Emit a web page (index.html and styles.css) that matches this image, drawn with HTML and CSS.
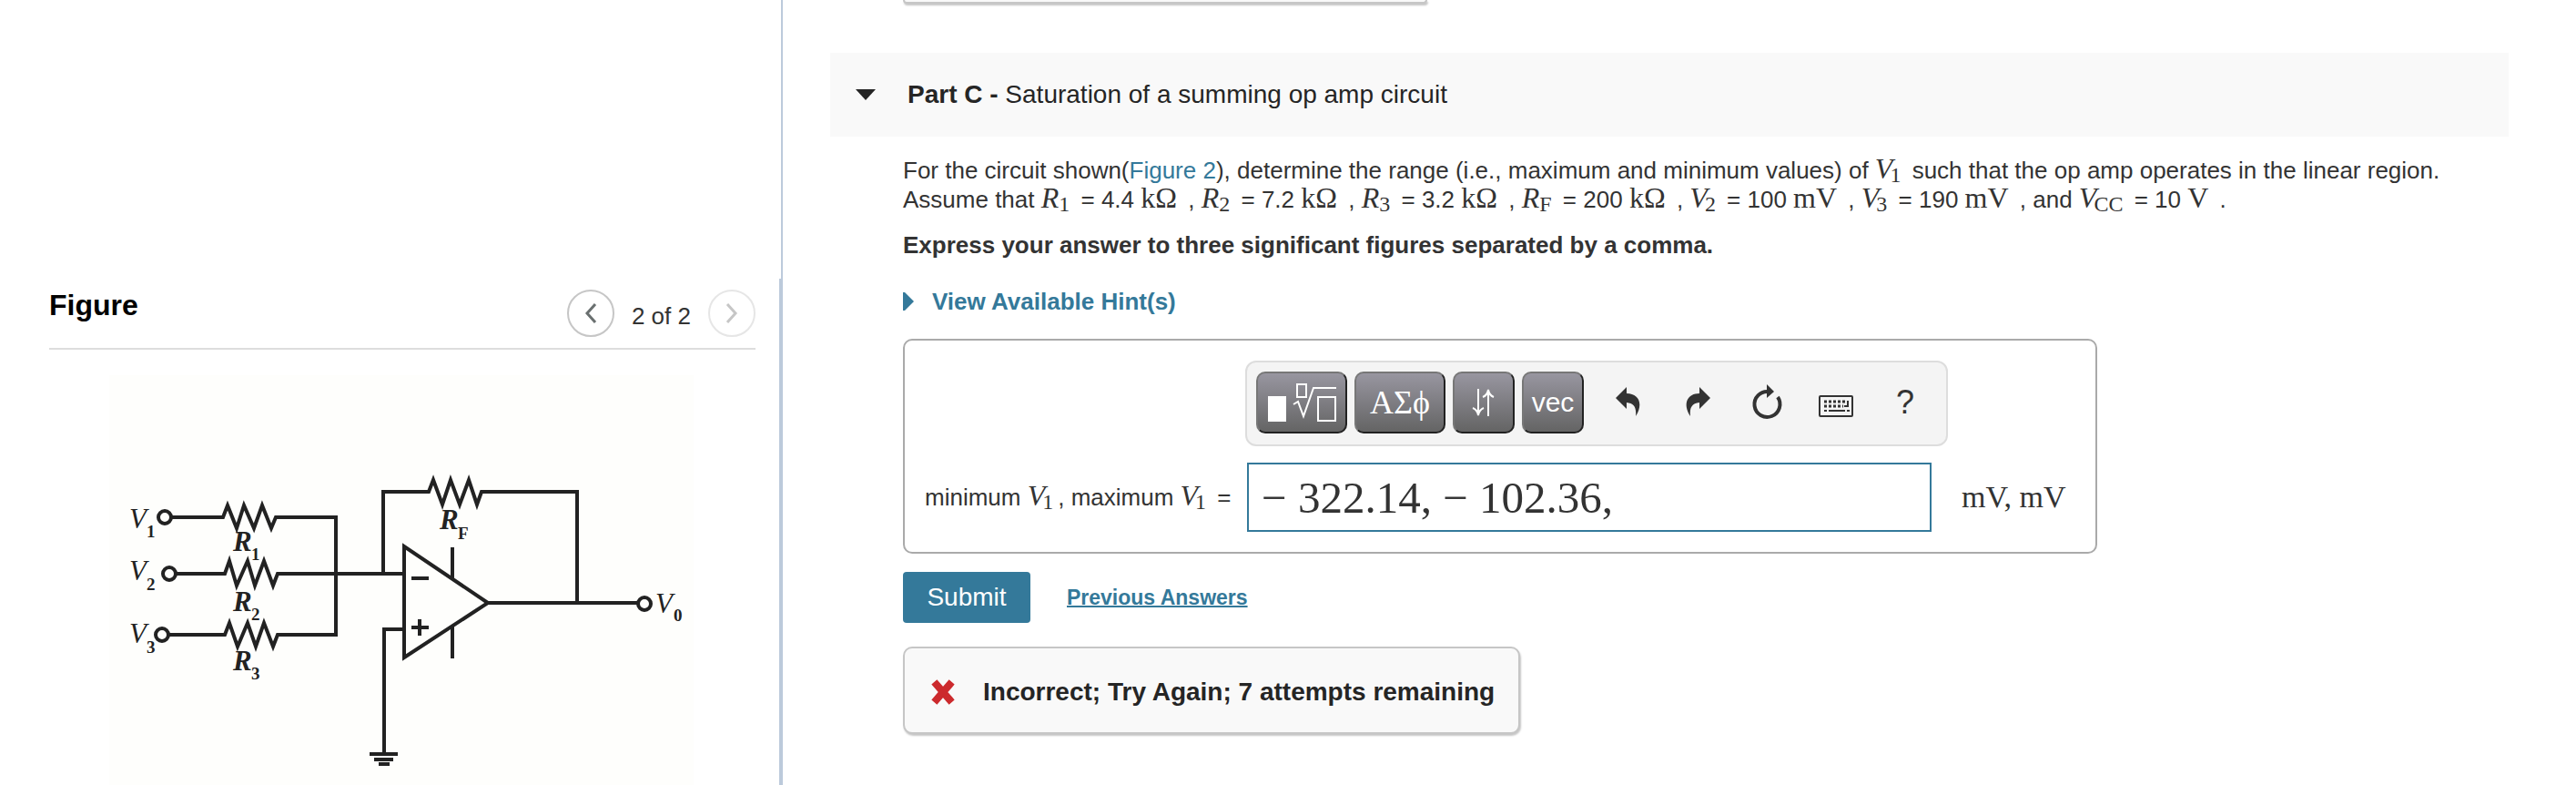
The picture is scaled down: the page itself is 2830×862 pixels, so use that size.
FILE: index.html
```html
<!DOCTYPE html>
<html lang="en">
<head>
    <meta charset="UTF-8">
    <meta name="viewport" content="width=device-width, initial-scale=1.0">
    <title>Saturation of a summing op amp circuit</title>
    <link rel="stylesheet" href="styles.css">
</head>
<body>
    <div class="layout">
        <aside class="sidebar">
            <div class="sidebar-top"></div>
            <section class="figure-panel">
                <div class="figure-header">
                    <h2>Figure</h2>
                    <div class="pager">
                        <button type="button" class="pager-btn" aria-label="Previous figure">
                            <svg width="14" height="24" viewBox="0 0 14 24"><path d="M12 2 L3 12 L12 22" fill="none" stroke="currentColor" stroke-width="3"/></svg>
                        </button>
                        <span class="pager-count">2 of 2</span>
                        <button type="button" class="pager-btn" aria-label="Next figure" disabled>
                            <svg width="14" height="24" viewBox="0 0 14 24"><path d="M2 2 L11 12 L2 22" fill="none" stroke="currentColor" stroke-width="3"/></svg>
                        </button>
                    </div>
                </div>
                <svg class="circuit" viewBox="120 412 642 450" role="img" aria-label="Summing op amp circuit">
                    <g class="wires">
                        <!-- inputs -->
                        <path d="M188 568H245L250 555L260 580L268 555L279 580L288 555L298 580L303 568H369V697"/>
                        <path d="M194 630H247L252 616L260 643L272 616L280 643L290 616L300 643L305 630H444"/>
                        <path d="M186 697H247L252 684L261 710L272 684L281 710L290 684L300 710L305 697H371"/>
                        <circle cx="181" cy="568" r="7"/>
                        <circle cx="186" cy="630" r="7"/>
                        <circle cx="178" cy="697" r="7"/>
                        <!-- feedback -->
                        <path d="M421 630V540H471L476 527L486 554L495 527L505 554L515 527L524 554L529 540H634V662"/>
                        <!-- op amp -->
                        <path d="M444 600V722L536 662Z"/>
                        <path d="M497 601V635M497 688V723"/>
                        <path d="M452 635H471M452 689H471M461 680V698"/>
                        <path d="M536 662H702"/>
                        <circle cx="708" cy="663" r="7"/>
                        <!-- ground -->
                        <path d="M444 691H422V827M406 828H437M411 834H432M416 839H428"/>
                    </g>
                    <g class="names">
                        <text x="142" y="580">V</text>
                        <text x="142" y="637">V</text>
                        <text x="142" y="706">V</text>
                        <text x="720" y="673">V</text>
                        <g class="bold">
                            <text x="256" y="605">R</text>
                            <text x="256" y="671">R</text>
                            <text x="256" y="736">R</text>
                            <text x="483" y="581">R</text>
                        </g>
                    </g>
                    <g class="subs">
                        <text x="161" y="590">1</text>
                        <text x="161" y="648">2</text>
                        <text x="161" y="717">3</text>
                        <text x="740" y="682">0</text>
                        <text x="276" y="615">1</text>
                        <text x="276" y="681">2</text>
                        <text x="276" y="746">3</text>
                        <text x="503" y="592">F</text>
                    </g>
                </svg>
            </section>
        </aside>

        <main class="content">
            <div class="previous-box"></div>

            <section class="part">
                <h2 class="part-header">
                    <svg width="22" height="12" viewBox="0 0 22 12"><path d="M0 0H22L11 12Z" fill="#252525"/></svg>
                    <span><b>Part C -</b> Saturation of a summing op amp circuit</span>
                </h2>

                <div class="part-body">
                    <p>For the circuit shown(<a href="#">Figure 2</a>), determine the range (i.e., maximum and minimum values) of <span class="math"><i class="volt">V</i><sub>1</sub></span> such that the op amp operates in the linear region.<br>
                    Assume that <span class="math"><i>R</i><sub>1</sub></span> = 4.4 <span class="math">kΩ</span> , <span class="math"><i>R</i><sub>2</sub></span> = 7.2 <span class="math">kΩ</span> , <span class="math"><i>R</i><sub>3</sub></span> = 3.2 <span class="math">kΩ</span> , <span class="math"><i>R</i><sub>F</sub></span> = 200 <span class="math">kΩ</span> , <span class="math"><i class="volt">V</i><sub>2</sub></span> = 100 <span class="math">mV</span> , <span class="math"><i class="volt">V</i><sub>3</sub></span> = 190 <span class="math">mV</span> , and <span class="math"><i class="volt">V</i><sub>CC</sub></span> = 10 <span class="math">V</span> .</p>

                    <p class="instructions">Express your answer to three significant figures separated by a comma.</p>

                    <button type="button" class="hints">
                        <svg width="12" height="20" viewBox="0 0 12 20"><path d="M0 0H2L12 10L2 20H0Z" fill="currentColor"/></svg>
                        View Available Hint(s)
                    </button>

                    <form id="answerForm" class="answer-box">
                        <div class="toolbar">
                            <button type="button" class="tool tool-wide" aria-label="Templates">
                                <svg width="76" height="44" viewBox="0 0 76 44">
                                    <rect x="1" y="15" width="20" height="28" fill="#fff"/>
                                    <g fill="none" stroke="#fff" stroke-width="2">
                                        <rect x="33" y="2" width="10" height="14"/>
                                        <rect x="56" y="16" width="19" height="26"/>
                                        <path d="M29 24L34 21L40 37L51 6H76"/>
                                    </g>
                                </svg>
                            </button>
                            <button type="button" class="tool tool-wide tool-greek">ΑΣϕ</button>
                            <button type="button" class="tool" aria-label="Subscript and superscript">
                                <svg width="28" height="32" viewBox="0 0 28 32">
                                    <path d="M8 1V29M2 22Q7 24 8 30Q9 24 14 22M19 31V3M13 10Q18 8 19 2Q20 8 25 10" fill="none" stroke="#fff" stroke-width="2"/>
                                </svg>
                            </button>
                            <button type="button" class="tool tool-vec">vec</button>
                            <button type="button" class="icon-btn" aria-label="Undo">
                                <svg width="44" height="44" viewBox="0 0 44 44"><path d="M8 17L20 5V12C33 12 39 23 30 37C31 27 28 23 20 22V29Z"/></svg>
                            </button>
                            <button type="button" class="icon-btn" aria-label="Redo">
                                <svg width="44" height="44" viewBox="0 0 44 44"><path d="M36 17L24 5V12C11 12 5 23 14 37C13 27 16 23 24 22V29Z"/></svg>
                            </button>
                            <button type="button" class="icon-btn" aria-label="Reset">
                                <svg width="44" height="44" viewBox="0 0 44 44"><path d="M24 10A14 14 0 1 0 34 16" fill="none" stroke="#333" stroke-width="4"/><path d="M22 2L30 10L22 17Z"/></svg>
                            </button>
                            <button type="button" class="icon-btn" aria-label="Keyboard shortcuts">
                                <svg width="44" height="44" viewBox="0 0 44 44">
                                    <rect x="4" y="15" width="36" height="22" rx="1" fill="none" stroke="#333" stroke-width="2"/>
                                    <path d="M9 21H32M9 26H30" fill="none" stroke="#333" stroke-width="3" stroke-dasharray="3 2"/>
                                    <path d="M35 20V26H31M9 31H12M14 31H32M34 31H37" fill="none" stroke="#333" stroke-width="2"/>
                                </svg>
                            </button>
                            <button type="button" class="icon-btn icon-help" aria-label="Help">?</button>
                        </div>
                        <div class="answer-row">
                            <label for="answer">minimum <span class="math"><i class="volt">V</i><sub>1</sub></span>, maximum <span class="math"><i class="volt">V</i><sub>1</sub></span> =</label>
                            <input type="text" id="answer" value="− 322.14, − 102.36,">
                            <span class="units">mV, mV</span>
                        </div>
                    </form>

                    <div class="actions">
                        <button type="submit" form="answerForm" class="submit">Submit</button>
                        <a href="#" class="previous">Previous Answers</a>
                    </div>

                    <div class="feedback">
                        <svg width="28" height="28" viewBox="0 0 28 28"><path d="M7 6L21 22M21 6L7 22" stroke="#cc2a2d" stroke-width="8" stroke-linecap="square"/></svg>
                        <strong>Incorrect; Try Again; 7 attempts remaining</strong>
                    </div>
                </div>
            </section>
        </main>
    </div>
</body>
</html>
```
FILE: styles.css
```css
* {
    box-sizing: border-box;
}
body {
    font-family: "Liberation Sans", Arial, sans-serif;
    font-size: 26px;
    line-height: 32px;
    background-color: #ffffff;
    color: #333333;
    margin: 0;
}
h2, p {
    margin: 0;
}
button {
    font-family: inherit;
    cursor: pointer;
}
a {
    color: #34799a;
    text-decoration: none;
}
.layout {
    display: flex;
    min-height: 100vh;
}

/* Sidebar */
.sidebar {
    display: flex;
    flex-direction: column;
    flex: 0 0 860px;
}
.sidebar-top {
    height: 306px;
    border-right: 2px solid #bccadb;
}
.figure-panel {
    flex: 1;
    padding: 12px 26px 0 54px;
    border-right: 4px solid #bccadb;
}
.figure-header {
    display: flex;
    justify-content: space-between;
    height: 66px;
    border-bottom: 2px solid #dddddd;
}
.figure-header h2 {
    font-size: 32px;
    line-height: 34px;
    color: #000000;
}
.pager {
    display: flex;
    gap: 19px;
}
.pager-count {
    padding-top: 13px;
}
.pager-btn {
    display: flex;
    align-items: center;
    justify-content: center;
    width: 52px;
    height: 52px;
    padding: 0;
    background: none;
    border: 2px solid #c6c6c6;
    border-radius: 50%;
    color: #6a7070;
}
.pager-btn:disabled {
    border-color: #e6e6e6;
    color: #c6c6c6;
}
.circuit {
    display: block;
    width: 642px;
    margin: 28px 0 0 66px;
    background-color: #fefefc;
}
.wires {
    fill: none;
    stroke: #222222;
    stroke-width: 4;
}
.names, .subs {
    font-family: "Liberation Serif", "Times New Roman", serif;
    fill: #222222;
}
.names {
    font-size: 31px;
    font-style: italic;
}
.bold, .subs {
    font-weight: bold;
}
.subs {
    font-size: 19px;
}

/* Content */
.content {
    flex: 1;
    padding: 0 74px 0 52px;
}
.previous-box {
    width: 576px;
    height: 4px;
    margin: 0 0 54px 80px;
    background-color: #f9f9f9;
    border: 2px solid #c6c6c6;
    border-top: none;
    border-radius: 0 0 10px 10px;
    box-shadow: 1px 2px 2px #c6c6c6;
}
.part-header {
    display: flex;
    align-items: center;
    gap: 35px;
    padding: 30px 28px;
    background-color: #f9f9f9;
    color: #252525;
    font-size: 28px;
    font-weight: normal;
}
.part-body {
    padding: 21px 0 0 80px;
}
.math {
    font-family: "Liberation Serif", "Times New Roman", serif;
    font-size: 32px;
    line-height: 0;
    margin-right: 5px;
}
.math sub {
    font-size: 24px;
    line-height: 0;
    vertical-align: -4px;
}
/* subscript tucks under the slanted V */
.volt {
    margin-right: -3px;
}
.instructions {
    margin-top: 18px;
    font-weight: bold;
}
.hints {
    display: flex;
    align-items: center;
    gap: 20px;
    margin: 30px 0 25px;
    padding: 0;
    background: none;
    border: none;
    color: #34799a;
    font-size: 26px;
    font-weight: bold;
    line-height: 32px;
}
.answer-box {
    max-width: 1312px;
    padding: 22px;
    border: 2px solid #aaaaaa;
    border-radius: 10px;
}
.toolbar {
    display: flex;
    align-items: center;
    gap: 8px;
    width: 772px;
    height: 94px;
    margin: 0 0 18px 352px;
    padding: 0 10px 2px;
    background-color: #f4f4f4;
    border: 2px solid #dddddd;
    border-radius: 12px;
}
.tool {
    display: flex;
    align-items: center;
    justify-content: center;
    width: 68px;
    height: 68px;
    padding: 0;
    background: linear-gradient(#9896a0, #646464);
    border: 2px solid;
    border-color: #777777 #222222 #222222 #777777;
    border-radius: 10px;
    color: #ffffff;
    font-size: 30px;
}
.tool-wide {
    width: 100px;
}
.tool-greek {
    font-family: "Liberation Serif", "Times New Roman", serif;
    font-size: 36px;
}
.tool-vec {
    margin-right: 7px;
}
.icon-btn {
    display: flex;
    align-items: center;
    justify-content: center;
    width: 68px;
    height: 68px;
    padding: 0;
    background: none;
    border: none;
    color: #333333;
    fill: #333333;
}
.icon-help {
    font-size: 36px;
}
.answer-row {
    display: flex;
    align-items: center;
}
.answer-row label {
    width: 354px;
}
.answer-row input {
    flex: 1;
    min-width: 0;
    height: 76px;
    padding: 0 14px;
    border: 2px solid #34799a;
    color: #333333;
    font-family: "Liberation Serif", "Times New Roman", serif;
    font-size: 49px;
}
.units {
    width: 158px;
    padding-left: 33px;
    font-family: "Liberation Serif", "Times New Roman", serif;
    font-size: 34px;
    white-space: nowrap;
}
.actions {
    display: flex;
    align-items: center;
    gap: 40px;
    margin: 20px 0 26px;
}
.submit {
    width: 140px;
    height: 56px;
    background-color: #34799a;
    border: none;
    border-radius: 4px;
    color: #ffffff;
    font-size: 28px;
}
.previous {
    font-size: 23px;
    font-weight: bold;
    text-decoration: underline;
    text-decoration-thickness: 2px;
}
.feedback {
    display: flex;
    align-items: center;
    gap: 30px;
    width: fit-content;
    height: 96px;
    padding: 4px 26px 0 28px;
    background-color: #f9f9f9;
    border: 2px solid #c6c6c6;
    border-radius: 10px;
    box-shadow: 1px 2px 2px #c6c6c6;
    color: #252525;
    font-size: 28px;
}
```
